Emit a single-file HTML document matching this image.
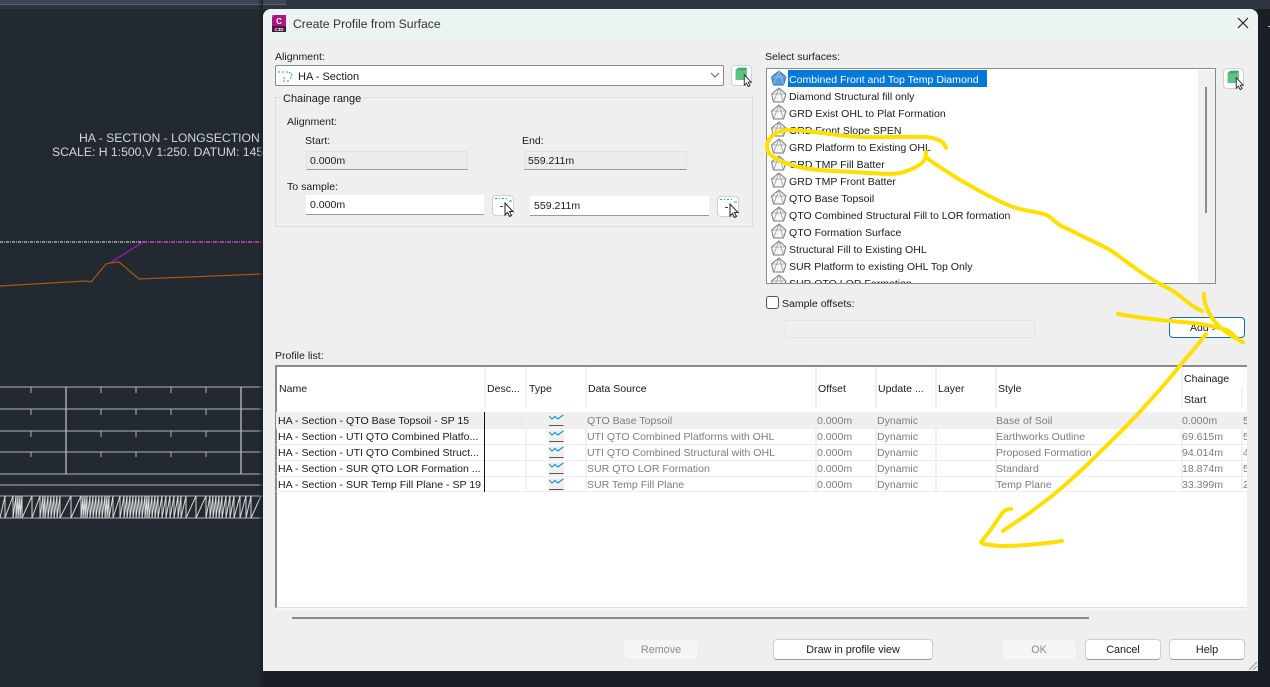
<!DOCTYPE html>
<html><head><meta charset="utf-8"><title>Create Profile from Surface</title>
<style>
html,body{margin:0;padding:0;background:#222931}
#p{position:relative;width:1270px;height:687px;overflow:hidden;background:#222931;font-family:"Liberation Sans",sans-serif;font-size:10.55px;color:#1a1a1a}
#p div,#p span.a{position:absolute;white-space:nowrap}
.t{line-height:18px;height:16px}
.m{color:#7d7d7d}
.ro{background:#ececec;border:1px solid #e2e2e2;border-bottom:1px solid #999;box-sizing:border-box;line-height:18px;padding-left:3px}
.in{background:#fff;border-bottom:1px solid #999;box-sizing:border-box;line-height:21px;padding-left:4px}
.pb{background:#fff;border:1px solid #d0d0d0;border-radius:4px;box-sizing:border-box}
.pb svg{position:absolute;left:0;top:0}
.btn{background:#fff;border:1px solid #d0d0d0;border-bottom:1px solid #9c9c9c;border-radius:4px;box-sizing:border-box;text-align:center;line-height:21px;top:639px;height:21px;width:76px;font-size:10.8px}
.dis{background:#f5f5f5;border:1px solid #ececec;color:#8a8a8a}
.sep{width:2px;background:#f0f0f0;top:367px;height:41px}
.rs{width:2px;background:#f0f0f0;top:412px;height:80px}
.hl{height:1px;left:276px;width:964px;background:#eeeeee}
svg{display:block}
</style></head><body><div id="p">
<div style="left:0;top:0;width:1270px;height:9px;background:#2e3540"></div>
<div style="left:0;top:0;width:286px;height:4px;background:#3c4554;border-bottom:1px solid #5a6270"></div>
<div style="left:1258px;top:9px;width:12px;height:678px;background:#1a1f25"></div>
<div style="left:263px;top:671px;width:1007px;height:16px;background:#1a1f25"></div>
<div style="left:1268px;top:26px;width:2px;height:1px;background:#ccc"></div>

<!-- CAD canvas -->
<div style="left:0;top:130px;width:263px;height:30px;overflow:hidden;color:#d6d6d6;font-size:12.2px;line-height:14px">
<div style="left:79px;top:1px">HA - SECTION - LONGSECTION</div>
<div style="left:52px;top:15px">SCALE: H 1:500,V 1:250. DATUM: 145</div>
</div>
<svg style="position:absolute;left:0;top:0" width="263" height="687" fill="none">
<path d="M0 242H143" stroke="#c8c8c8" stroke-width="1.3" stroke-dasharray="3 1 1 1"/>
<path d="M143 242H263" stroke="#d45bd8" stroke-width="1.3" stroke-dasharray="4 1 1 1"/>
<path d="M110 263L143 242" stroke="#a317c0" stroke-width="1.2"/>
<path d="M0 286L85 281L91 282L106 264L110 263L119 262L139 279L263 274" stroke="#a85a10" stroke-width="1.2"/>
<g stroke="#b4b4b4" stroke-width="1">
<path d="M0 387H263M0 409H263M0 431H263M0 452H263M0 474H263M0 485H263M0 496H263M0 518H263"/>
<path d="M66 387V474M241 387V474" stroke-width="1.4"/>
<path d="M31 387v6M101 387v6M136 387v6M171 387v6M206 387v6M31 409v6M101 409v6M136 409v6M171 409v6M206 409v6M31 431v6M101 431v6M136 431v6M171 431v6M206 431v6M31 452v5M101 452v5M136 452v5M171 452v5M206 452v5"/>
<path stroke="#d8d8d8" d="M0 518L5 496V518L13 496V518L16 496V518L18 496V518L20 496V518L22 496V518L32 496V518L40 496V518L43 496V518L45 496V518L48 496V518L51 496V518L54 496V518L57 496V518L60 496V518L71 496V518L81 496V518L83 496V518L85 496V518L87 496V518L90 496V518L93 496V518L96 496V518L99 496V518L102 496V518L105 496V518L107 496V518L109 496V518L113 496V518L120 496V518L124 496V518L127 496V518L130 496V518L133 496V518L136 496V518L139 496V518L142 496V518L145 496V518L147 496V518L149 496V518L152 496V518L155 496V518L158 496V518L162 496V518L166 496V518L170 496V518L174 496V518L178 496V518L181 496V518L186 496V518L196 496V518L206 496V518L210 496V518L213 496V518L216 496V518L219 496V518L222 496V518L226 496V518L230 496V518L234 496V518L240 496V518L246 496V518L251 496V518L261 496"/>
</g>
</svg>
<div style="left:258px;top:0;width:5px;height:687px;background:linear-gradient(90deg,rgba(30,35,40,0),rgba(26,31,37,.9))"></div>

<!-- Dialog -->
<div style="left:263px;top:9px;width:995px;height:662px;background:#efefef;border-radius:8px 8px 0 0;overflow:hidden">
<div style="left:0;top:0;width:995px;height:30px;background:#ecf4f3"></div>
</div>
<svg style="position:absolute;left:271px;top:15px" width="16" height="17"><rect x="1" y="0" width="14" height="11" fill="#a9187f"/><path d="M1 0L4 0L1 3Z" fill="#c94aa3"/><rect x="1" y="11" width="14" height="6" fill="#4e1440"/><text x="8" y="9" text-anchor="middle" font-family="Liberation Sans" font-weight="700" font-size="8" fill="#fff">C</text><text x="8" y="16" text-anchor="middle" font-family="Liberation Sans" font-weight="700" font-size="4.5" fill="#fff">C3D</text></svg>
<div class="t" style="left:293px;top:15px;font-size:12.2px;color:#333">Create Profile from Surface</div>
<svg style="position:absolute;left:1237px;top:17px" width="12" height="12"><path d="M1 1L11 11M11 1L1 11" stroke="#222" stroke-width="1.2"/></svg>

<svg width="0" height="0" style="position:absolute"><defs>
<g id="surf" fill="none"><path d="M8 1L15 7L12.500 15H2.500L0.500 7Z" stroke="#777" fill="#f6f6f6"/><path d="M0.500 7H15M8 1L2.500 15M8 1L12.500 15" stroke="#9a9a9a" stroke-width=".8"/></g>
<g id="cube"><path d="M4 5L7 2H17V16H4Z" fill="#5dc486"/><path d="M4 5L7 2H17L15 5Z" fill="#3ea968"/><path d="M14 10V22L16.500 19.500L18.500 23.500L20.500 22.500L18.500 18.500H22Z" fill="#fff" stroke="#222" stroke-width="1"/></g>
<g id="pick"><path d="M2 2.500h2M6 2.500h1M9 2.500h2M13 2.500h1" stroke="#2b8fd8" stroke-width="1" fill="none"/><path d="M16 5h3" stroke="#2b8fd8"/><path d="M7 10.500h3" stroke="#444"/><path d="M12 7V19L14.500 16.500L16.500 20.500L18.500 19.500L16.500 15.500H20Z" fill="#fff" stroke="#222"/></g>
<g id="wave"><rect x="0" y="0" width="15" height="14" fill="#f0f0f0"/><path d="M0 2L3 5L6 2.500L9 5L12 2.500L14.500 1" fill="none" stroke="#2b8fd8" stroke-width="1.2"/><path d="M0 11.500H14.500" stroke="#555"/></g>
</defs></svg>

<!-- left column -->
<div class="t" style="left:275px;top:48px">Alignment:</div>
<div style="left:275px;top:65px;width:449px;height:21px;background:#fff;border:1px solid #8a8a8a;box-sizing:border-box;border-radius:2px"></div>
<svg style="position:absolute;left:277px;top:69px" width="18" height="14" fill="none" stroke="#2b8fd8"><path d="M1 3h2M5 3h2M9 3h2" /><path d="M12 3l3 3l-2 4" stroke-dasharray="2 1"/><path d="M6 12h2M10 12h2M7 8v2" /></svg>
<div class="t" style="left:298px;top:68px;font-size:11px">HA - Section</div>
<svg style="position:absolute;left:710px;top:72px" width="10" height="7"><path d="M1 1L5 5L9 1" fill="none" stroke="#666"/></svg>
<div class="pb" style="left:731px;top:65px;width:21px;height:21px"><svg width="21" height="21" viewBox="0 0 24 24" style="left:0;top:0"><use href="#cube"/></svg></div>

<div style="left:275px;top:97px;width:478px;height:130px;border:1px solid #dcdcdc;box-sizing:border-box"></div>
<div class="t" style="left:281px;top:90px;background:#efefef;padding:0 2px;font-size:11px">Chainage range</div>
<div class="t" style="left:287px;top:113px">Alignment:</div>
<div class="t" style="left:305px;top:132px">Start:</div>
<div class="t" style="left:522px;top:132px">End:</div>
<div class="ro" style="left:306px;top:151px;width:162px;height:19px">0.000m</div>
<div class="ro" style="left:524px;top:151px;width:163px;height:19px">559.211m</div>
<div class="t" style="left:287px;top:178px">To sample:</div>
<div class="in" style="left:306px;top:195px;width:178px;height:20px">0.000m</div>
<div class="pb" style="left:492px;top:195px;width:22px;height:21px"><svg width="21" height="21"><use href="#pick"/></svg></div>
<div class="in" style="left:530px;top:196px;width:179px;height:20px">559.211m</div>
<div class="pb" style="left:717px;top:196px;width:22px;height:21px"><svg width="21" height="21"><use href="#pick"/></svg></div>

<!-- surfaces -->
<div class="t" style="left:765px;top:48px">Select surfaces:</div>
<div style="left:766px;top:68px;width:450px;height:216px;background:#fff;border:1px solid #8a8a8a;box-sizing:border-box;overflow:hidden">
<div style="left:431px;top:1px;width:17px;height:213px;background:#f0f0f0"></div>
<div style="left:438px;top:18px;width:2px;height:126px;background:#8a8a8a"></div>
<div style="left:21px;top:1px;width:199px;height:17px;background:#0078d7"></div>
<svg style="position:absolute;left:4px;top:1px" width="16" height="17"><path d="M8 1L15 7L12.500 15H2.500L0.500 7Z" fill="#5b9bd5" stroke="#2f6fa8"/><path d="M0.500 7H15M8 1L2.500 15M8 1L12.500 15" stroke="#9cc4e8" stroke-width=".8" fill="none"/></svg>
<svg style="position:absolute;left:4px;top:18px" width="16" height="17"><use href="#surf"/></svg>
<svg style="position:absolute;left:4px;top:35px" width="16" height="17"><use href="#surf"/></svg>
<svg style="position:absolute;left:4px;top:52px" width="16" height="17"><use href="#surf"/></svg>
<svg style="position:absolute;left:4px;top:69px" width="16" height="17"><use href="#surf"/></svg>
<svg style="position:absolute;left:4px;top:86px" width="16" height="17"><use href="#surf"/></svg>
<svg style="position:absolute;left:4px;top:103px" width="16" height="17"><use href="#surf"/></svg>
<svg style="position:absolute;left:4px;top:120px" width="16" height="17"><use href="#surf"/></svg>
<svg style="position:absolute;left:4px;top:137px" width="16" height="17"><use href="#surf"/></svg>
<svg style="position:absolute;left:4px;top:154px" width="16" height="17"><use href="#surf"/></svg>
<svg style="position:absolute;left:4px;top:171px" width="16" height="17"><use href="#surf"/></svg>
<svg style="position:absolute;left:4px;top:188px" width="16" height="17"><use href="#surf"/></svg>
<svg style="position:absolute;left:4px;top:205px" width="16" height="17"><use href="#surf"/></svg>
<div class="t" style="left:22px;top:2px;color:#fff">Combined Front and Top Temp Diamond</div>
<div class="t" style="left:22px;top:19px">Diamond Structural fill only</div>
<div class="t" style="left:22px;top:36px">GRD Exist OHL to Plat Formation</div>
<div class="t" style="left:22px;top:53px">GRD Front Slope SPEN</div>
<div class="t" style="left:22px;top:70px">GRD Platform to Existing OHL</div>
<div class="t" style="left:22px;top:87px">GRD TMP Fill Batter</div>
<div class="t" style="left:22px;top:104px">GRD TMP Front Batter</div>
<div class="t" style="left:22px;top:121px">QTO Base Topsoil</div>
<div class="t" style="left:22px;top:138px">QTO Combined Structural Fill to LOR formation</div>
<div class="t" style="left:22px;top:155px">QTO Formation Surface</div>
<div class="t" style="left:22px;top:172px">Structural Fill to Existing OHL</div>
<div class="t" style="left:22px;top:189px">SUR Platform to existing OHL Top Only</div>
<div class="t" style="left:22px;top:206px">SUR QTO LOR Formation</div>
</div>
<div class="pb" style="left:1223px;top:68px;width:21px;height:21px"><svg width="21" height="21" viewBox="0 0 24 24"><use href="#cube"/></svg></div>
<div style="left:766px;top:296px;width:13px;height:13px;background:#fff;border:1px solid #555;border-radius:3px;box-sizing:border-box"></div>
<div class="t" style="left:782px;top:295px">Sample offsets:</div>
<div style="left:785px;top:320px;width:250px;height:18px;background:#efefef;border:1px solid #e4e4e4;box-sizing:border-box"></div>
<div style="left:1169px;top:317px;width:76px;height:21px;background:#fff;border:1px solid #0f6cbd;border-radius:4px;box-sizing:border-box;text-align:center;line-height:20px">Add &gt;&gt;</div>

<!-- profile list -->
<div class="t" style="left:275px;top:347px">Profile list:</div>
<div style="left:275px;top:365px;width:972px;height:243px;background:#fff;border:2px solid #8a8a8a;border-right:0;border-bottom:1px solid #ddd;box-sizing:border-box"></div>
<div style="left:275px;top:608px;width:972px;height:2px;background:#f6f6f6"></div>
<div class="sep" style="left:484px"></div><div class="sep" style="left:525px"></div><div class="sep" style="left:585px"></div><div class="sep" style="left:815px"></div><div class="sep" style="left:875px"></div><div class="sep" style="left:935px"></div><div class="sep" style="left:995px"></div><div class="sep" style="left:1181px"></div><div class="sep" style="left:1241px;top:388px;height:20px"></div>
<div class="t" style="left:279px;top:380px">Name</div>
<div class="t" style="left:487px;top:380px">Desc...</div>
<div class="t" style="left:529px;top:380px">Type</div>
<div class="t" style="left:588px;top:380px">Data Source</div>
<div class="t" style="left:818px;top:380px">Offset</div>
<div class="t" style="left:878px;top:380px">Update ...</div>
<div class="t" style="left:938px;top:380px">Layer</div>
<div class="t" style="left:998px;top:380px">Style</div>
<div class="t" style="left:1184px;top:370px">Chainage</div>
<div class="t" style="left:1184px;top:391px">Start</div>
<div style="left:276px;top:412px;width:971px;height:16px;background:#efefef"></div>
<div class="hl" style="top:428px;width:971px"></div><div class="hl" style="top:444px;width:971px"></div><div class="hl" style="top:460px;width:971px"></div><div class="hl" style="top:476px;width:971px"></div><div class="hl" style="top:491px;width:971px"></div>
<div class="rs" style="left:525px"></div><div class="rs" style="left:585px"></div><div class="rs" style="left:815px"></div><div class="rs" style="left:875px"></div><div class="rs" style="left:935px"></div><div class="rs" style="left:995px"></div><div class="rs" style="left:1181px"></div><div class="rs" style="left:1241px"></div>
<div style="left:484px;top:412px;width:1px;height:80px;background:#111"></div>

<div class="t" style="left:278px;top:412px">HA - Section - QTO Base Topsoil - SP 15</div>
<div class="t" style="left:278px;top:428px">HA - Section - UTI QTO Combined Platfo...</div>
<div class="t" style="left:278px;top:444px">HA - Section - UTI QTO Combined Struct...</div>
<div class="t" style="left:278px;top:460px">HA - Section - SUR QTO LOR Formation ...</div>
<div class="t" style="left:278px;top:476px">HA - Section - SUR Temp Fill Plane - SP 19</div>
<svg style="position:absolute;left:549px;top:414px" width="15" height="14"><use href="#wave"/></svg>
<svg style="position:absolute;left:549px;top:430px" width="15" height="14"><use href="#wave"/></svg>
<svg style="position:absolute;left:549px;top:446px" width="15" height="14"><use href="#wave"/></svg>
<svg style="position:absolute;left:549px;top:462px" width="15" height="14"><use href="#wave"/></svg>
<svg style="position:absolute;left:549px;top:478px" width="15" height="14"><use href="#wave"/></svg>

<div class="t m" style="left:587px;top:412px">QTO Base Topsoil</div>
<div class="t m" style="left:587px;top:428px">UTI QTO Combined Platforms with OHL</div>
<div class="t m" style="left:587px;top:444px">UTI QTO Combined Structural with OHL</div>
<div class="t m" style="left:587px;top:460px">SUR QTO LOR Formation</div>
<div class="t m" style="left:587px;top:476px">SUR Temp Fill Plane</div>
<div class="t m" style="left:817px;top:412px">0.000m</div><div class="t m" style="left:817px;top:428px">0.000m</div><div class="t m" style="left:817px;top:444px">0.000m</div><div class="t m" style="left:817px;top:460px">0.000m</div><div class="t m" style="left:817px;top:476px">0.000m</div>
<div class="t m" style="left:877px;top:412px">Dynamic</div><div class="t m" style="left:877px;top:428px">Dynamic</div><div class="t m" style="left:877px;top:444px">Dynamic</div><div class="t m" style="left:877px;top:460px">Dynamic</div><div class="t m" style="left:877px;top:476px">Dynamic</div>
<div class="t m" style="left:996px;top:412px">Base of Soil</div><div class="t m" style="left:996px;top:428px">Earthworks Outline</div><div class="t m" style="left:996px;top:444px">Proposed Formation</div><div class="t m" style="left:996px;top:460px">Standard</div><div class="t m" style="left:996px;top:476px">Temp Plane</div>
<div class="t m" style="left:1182px;top:412px">0.000m</div><div class="t m" style="left:1182px;top:428px">69.615m</div><div class="t m" style="left:1182px;top:444px">94.014m</div><div class="t m" style="left:1182px;top:460px">18.874m</div><div class="t m" style="left:1182px;top:476px">33.399m</div>
<div class="t m" style="left:1243px;top:412px;width:4px;overflow:hidden">5</div><div class="t m" style="left:1243px;top:428px;width:4px;overflow:hidden">5</div><div class="t m" style="left:1243px;top:444px;width:4px;overflow:hidden">4</div><div class="t m" style="left:1243px;top:460px;width:4px;overflow:hidden">5</div><div class="t m" style="left:1243px;top:476px;width:4px;overflow:hidden">2</div>

<div style="left:292px;top:617px;width:797px;height:2px;background:#888"></div>
<div class="btn dis" style="left:623px">Remove</div>
<div class="btn" style="left:773px;width:160px">Draw in profile view</div>
<div class="btn dis" style="left:1001px">OK</div>
<div class="btn" style="left:1085px">Cancel</div>
<div class="btn" style="left:1169px">Help</div>
<svg style="position:absolute;left:1247px;top:660px" width="11" height="11"><path d="M10 2L2 10M10 6L6 10" stroke="#999"/></svg>

<!-- yellow annotation -->
<svg style="position:absolute;left:0;top:0" width="1270" height="687" fill="none" stroke="#ffdf00" stroke-width="4" stroke-linecap="round" stroke-linejoin="round">
<path d="M946 148C944 142 940 139 927 137C905 136 880 138 860 137C835 136 815 131 793 130C783 130 775 132 771 137C766 142 766 149 769 153C773 158 785 164 803 168C820 171 835 171 853 172C870 173 890 175 900 173C912 170 920 165 923 162C926 158 926 155 926 152"/>
<path d="M926 157C935 165 948 172 960 180C978 190 995 200 1013 207C1028 212 1043 212 1050 217C1058 225 1063 227 1070 230C1085 238 1098 243 1110 250C1125 260 1138 271 1150 278C1162 286 1172 289 1180 296C1188 303 1195 308 1202 311"/>
<path d="M1118 314C1145 319 1170 321 1193 323C1208 325 1218 327 1227 330C1232 332 1236 340 1243 342"/>
<path d="M1204 294C1204 303 1208 312 1212 318C1220 329 1230 336 1243 342"/>
<path d="M1206 334C1198 345 1188 356 1178 368C1165 385 1152 398 1137 415C1122 431 1106 446 1090 462C1073 478 1058 492 1040 505C1028 515 1015 522 1003 531"/>
<path d="M1011 509C1007 509 1005 510 1003 512C996 522 989 533 981 542C983 545 990 545 1000 546C1020 546 1042 544 1062 541"/>
</svg>
</div></body></html>
